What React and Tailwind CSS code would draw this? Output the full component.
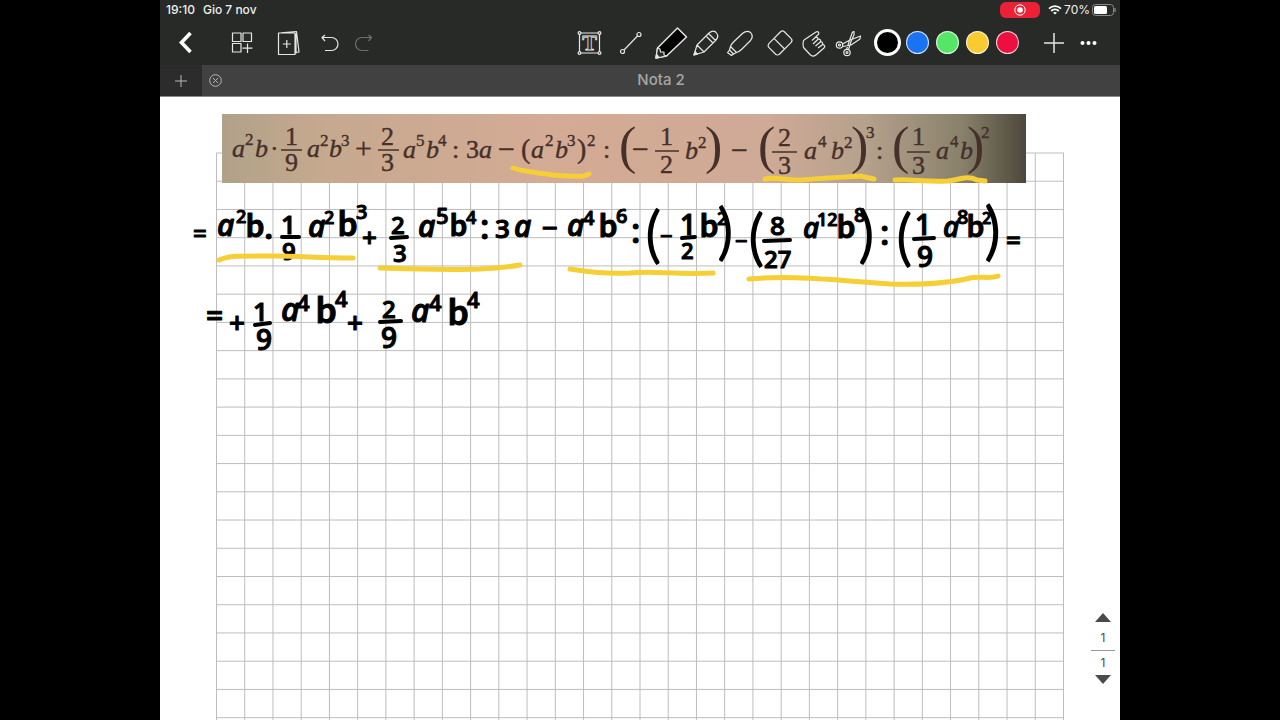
import clsx from "clsx";

const CELL = 847 / 30;

// [text, x, baseline, size]
const printed = [
  ["a", 232, 157, 26], ["2", 245, 145, 17], ["b", 255, 157, 26], ["·", 270, 157, 26],
  ["1", 285, 145, 26], ["9", 285, 171, 26],
  ["a", 307, 157, 26], ["2", 320, 146, 17], ["b", 329, 157, 26], ["3", 341, 146, 17],
  ["+", 355, 158, 30],
  ["2", 381, 145, 26], ["3", 381, 171, 26],
  ["a", 403, 158, 26], ["5", 416, 146, 17], ["b", 426, 158, 26], ["4", 438, 146, 17],
  [":", 452, 158, 26], ["3", 466, 158, 26], ["a", 479, 158, 26],
  ["−", 498, 159, 30], ["(", 521, 158, 28], ["a", 531, 158, 26], ["2", 545, 146, 17],
  ["b", 555, 158, 26], ["3", 567, 146, 17], [")", 577, 158, 28], ["2", 587, 146, 17],
  [":", 603, 158, 26],
  ["−", 632, 159, 30], ["1", 660, 145, 26], ["2", 660, 173, 26],
  ["b", 685, 159, 26], ["2", 698, 148, 17],
  ["−", 731, 160, 30],
  ["2", 778, 146, 26], ["3", 778, 174, 26],
  ["a", 804, 159, 26], ["4", 818, 147, 17], ["b", 831, 159, 26], ["2", 844, 148, 17],
  ["3", 866, 138, 17], [":", 876, 159, 26],
  ["1", 912, 145, 26], ["3", 912, 174, 26],
  ["a", 936, 159, 26], ["4", 950, 147, 17], ["b", 960, 159, 26],
  ["2", 981, 138, 17],
];

const printedBrackets = [
  ["(", 619, 163, 52], [")", 705, 163, 52],
  ["(", 758, 163, 52], [")", 851, 163, 52],
  ["(", 892, 163, 52], [")", 967, 163, 52],
];

const printedBars = [
  [281, 302, 150], [378, 399, 150], [655, 679, 151], [772, 797, 152], [907, 930, 152],
];

const written = [
  ["=", 193, 242, 24],
  ["a", 217, 236, 30], ["2", 236, 223, 18], ["b", 246, 237, 32],
  [".", 264, 239, 34], ["1", 281, 234, 26], ["9", 282, 260, 24],
  ["a", 308, 237, 30], ["2", 324, 224, 18], ["b", 338, 236, 34], ["3", 356, 219, 20],
  ["+", 362, 247, 26],
  ["2", 391, 234, 24], ["3", 393, 262, 24], ["a", 418, 237, 30], ["5", 436, 224, 22],
  ["b", 450, 236, 30], ["4", 466, 224, 18], [":", 480, 239, 34],
  ["3", 495, 238, 26], ["a", 514, 237, 30], ["−", 542, 238, 28],
  ["a", 567, 236, 30], ["4", 583, 225, 20], ["b", 599, 237, 32], ["6", 616, 223, 20],
  [":", 631, 243, 34],
  ["−", 660, 244, 22], ["1", 680, 235, 28], ["2", 681, 259, 22],
  ["b", 700, 237, 32], ["2", 717, 225, 18], ["−", 735, 249, 22],
  ["8", 770, 235, 26], ["27", 764, 268, 24],
  ["a", 803, 238, 28], ["12", 817, 226, 18], ["b", 837, 238, 32], ["8", 854, 222, 20],
  [":", 880, 245, 34],
  ["1", 915, 235, 28], ["9", 917, 267, 28],
  ["a", 943, 237, 28], ["8", 957, 224, 20], ["b", 967, 237, 30], ["2", 982, 224, 16],
  ["=", 1006, 249, 26],
  ["=", 206, 327, 30], ["+", 229, 333, 28],
  ["1", 253, 321, 26], ["9", 256, 350, 28], ["a", 281, 321, 32], ["4", 297, 311, 22],
  ["b", 316, 323, 36], ["4", 335, 307, 22], ["+", 347, 333, 28],
  ["2", 382, 318, 24], ["9", 381, 348, 28], ["a", 411, 322, 32], ["4", 429, 311, 22],
  ["b", 448, 325, 36], ["4", 467, 308, 22],
];

const writtenBrackets = [
  ["(", 645, 256, 62], [")", 717, 253, 62],
  ["(", 748, 259, 62], [")", 858, 256, 62],
  ["(", 896, 259, 62], [")", 984, 253, 64],
];

// fraction bars
const strokes = [
  "M282 237H299", "M391 238L407 237", "M682 238L695 237", "M764 241L790 240",
  "M914 239L934 238", "M255 325L270 323", "M380 322L401 321",
];

const highlights = [
  "M513 168C525 172 540 173 553 175C566 176 577 177 584 176L589 174",
  "M765 179C776 176 786 181 800 180C825 178 846 177 860 176L874 179",
  "M895 180C912 179 925 182 948 181C958 180 967 175 977 180L985 181",
  "M219 260C230 255 245 256 275 256C300 256 320 258 353 258",
  "M380 268C410 269 450 270 480 269C498 268 508 267 520 265",
  "M570 269C590 272 605 274 630 273C655 270 672 275 713 273",
  "M749 279C790 275 840 280 890 284C925 285 950 283 970 278C980 276 990 279 998 276",
];

const colors = [
  { name: "Blu", fill: "bg-[#1b72f3]" },
  { name: "Verde", fill: "bg-[#55e668]" },
  { name: "Giallo", fill: "bg-[#f8cb31]" },
  { name: "Rosso", fill: "bg-[#ec1040]" },
];

const ToolButton = ({ label, className, dimmed, children }) => (
  <button
    aria-label={label}
    className={clsx(
      "size-8 shrink-0",
      dimmed ? "text-[#6e6e6e]" : "text-[#e6e6e6]",
      className
    )}
  >
    <svg
      viewBox="0 0 32 32"
      fill="none"
      stroke="currentColor"
      strokeWidth="1.2"
      strokeLinejoin="round"
      className="size-8 overflow-visible"
    >
      {children}
    </svg>
  </button>
);

const StatusBar = () => (
  <div className="flex h-5 items-center pl-1.5 pr-1 text-xs font-medium text-[#f0f0f0]">
    <span>19:10</span>
    <span className="ml-2">Gio 7 nov</span>
    <span className="ml-auto flex h-4 w-10 items-center justify-center rounded-md bg-[#ec2135]">
      <svg viewBox="0 0 12 12" className="size-3">
        <circle cx="6" cy="6" r="5.2" fill="none" stroke="white" />
        <circle cx="6" cy="6" r="2.8" fill="white" />
      </svg>
    </span>
    <svg
      viewBox="0 0 14 10"
      fill="none"
      stroke="white"
      strokeWidth="1.8"
      className="ml-2 h-[10px] w-[14px]"
    >
      <path d="M1 3.6a8.6 8.6 0 0 1 12 0M3.2 6a5.4 5.4 0 0 1 7.6 0" />
      <path d="M7 9.6L5 7.8a3 3 0 0 1 4 0z" fill="white" stroke="none" />
    </svg>
    <span className="ml-0.5 font-normal">70%</span>
    <svg viewBox="0 0 24 12" className="ml-0.5 h-3 w-6">
      <rect x="0.5" y="0.5" width="21" height="11" rx="3" fill="none" stroke="#888" />
      <rect x="2" y="2" width="13" height="8" rx="1.5" fill="white" />
      <path d="M23 4v4" stroke="#888" strokeWidth="1.3" />
    </svg>
  </div>
);

const Toolbar = () => (
  <div className="flex h-[45px] items-center pl-[10px] pr-[15px]">
    <ToolButton label="Indietro">
      <path d="M20.5 6L11.5 15.5L20.5 25" stroke="white" strokeWidth="3.6" strokeLinejoin="miter" />
    </ToolButton>
    <ToolButton label="Pagine" className="ml-6">
      <path d="M6.5 6h8.5v8.5H6.5zM17 6H25.5v8.5h-8.5zM6.5 16.5h8.5v8.5H6.5zM21.5 16.5v9.5M16.5 21.2h10" />
    </ToolButton>
    <ToolButton label="Nuova pagina" className="ml-[14px]">
      <path d="M6.5 6H23v21.5H6.5zM9 5.8L24.5 4.5L27 25L23.5 25.5M24 6.5v20M14.8 13v8M10.8 17h8" />
    </ToolButton>
    <ToolButton label="Annulla" className="ml-[10px]">
      <path d="M11 8L8 10.5L11 14M8 10.5h9.5a6.5 6.5 0 0 1 0 13H11" />
    </ToolButton>
    <ToolButton label="Ripeti" className="ml-px" dimmed>
      <path d="M21.5 8L24.5 10.5L21.5 14M24.5 10.5H15a6.5 6.5 0 0 0 0 13h6.5" />
    </ToolButton>

    <ToolButton label="Testo" className="ml-auto">
      <path d="M7 6h17M7 26h17M5.5 7.5v17M25.5 7.5v17" />
      {[[5.5, 6], [25.5, 6], [5.5, 26], [25.5, 26]].map(([x, y]) => (
        <circle key={`${x}-${y}`} cx={x} cy={y} r="1.4" />
      ))}
      <text
        x="15.5"
        y="23"
        textAnchor="middle"
        fontSize="22"
        strokeWidth="0.8"
        className="font-['Liberation_Serif',serif] font-bold"
      >
        T
      </text>
    </ToolButton>
    <ToolButton label="Linea" className="ml-2">
      <circle cx="8.5" cy="24.5" r="2" />
      <circle cx="25" cy="7.5" r="2" />
      <path d="M10 23L23.5 9" />
    </ToolButton>
    <ToolButton label="Penna" className="ml-2">
      <path
        d="M2 31L3.5 21L23.5 1L32.5 10L12.5 29z"
        fill="black"
        strokeWidth="1.5"
      />
      <path d="M3.5 21L6 22L6.5 25L10 25L10 28L12.5 29L2 31z" fill="#282a28" />
      <path d="M2 31L2.6 27.5L5 30.3z" fill="currentColor" />
    </ToolButton>
    <ToolButton label="Matita" className="ml-1">
      <path d="M4 28L7 18L19 6C22 3.5 25 3.5 26.5 6C28.5 8.5 28 11 25.5 13.5L14 25zM7 18L14 25M16 9L23 16M18.5 6.5L25.5 13.5" />
      <path d="M4 28L5 24.8L7.4 27z" fill="currentColor" />
    </ToolButton>
    <ToolButton label="Evidenziatore" className="ml-0.5">
      <path d="M6.5 19.5C7 17.5 8 16.5 10 14.5L19 6C22 3.5 25.5 4 27 6C28.8 8.5 28.5 11 26.5 13.5L18 22C15.5 24.5 14.5 25 12.5 25.5zM6.5 19.5L5.5 23L9.5 27L12.5 25.5M5.5 23L3.5 25.5L7.5 28.5L9.5 27" />
    </ToolButton>
    <ToolButton label="Gomma" className="ml-2">
      <g transform="rotate(-45 16 16)">
        <rect x="5" y="8.5" width="22" height="15" rx="3" />
        <path d="M15 8.5v15" />
      </g>
    </ToolButton>
    <ToolButton label="Mano" className="ml-0.5">
      <path d="M6 13L18 5C20 3.8 21.8 6 20.3 7.5L14 13.5M6 13C4.5 15 5 18 5.5 20.5L12.5 28C14.5 29.5 17 29 18.5 27.5L26 21C28 19 25.5 17 24 18L20 21M24 18C26 16 23.5 14 22 15.2L17.5 19M22 15.2C23.8 13 21.5 11.5 19.8 12.5L15 17M19.8 12.5C20.5 10.5 18.5 10 17.5 10.5" />
    </ToolButton>
    <ToolButton label="Taglia" className="ml-0.5">
      <circle cx="7.5" cy="18" r="3.2" />
      <circle cx="7.5" cy="18" r="1" />
      <circle cx="15" cy="25.5" r="3.2" />
      <circle cx="15" cy="25.5" r="1" />
      <path d="M14.5 22.5L17 15L20.5 5L22 4.5V8L19 14.5L16.5 22.5M10.5 17L17 13.5L28.5 9L28 12L19 18L10.8 19.5" />
    </ToolButton>

    <div className="ml-2 flex">
      <button aria-label="Nero" className="flex size-[30px] items-center justify-center">
        <span className="size-[27px] shrink-0 rounded-full border-3 border-white bg-black" />
      </button>
      {colors.map(({ name, fill }) => (
        <button
          key={name}
          aria-label={name}
          className="flex size-[30px] items-center justify-center"
        >
          <span className={clsx("size-[23px] rounded-full border border-white/80", fill)} />
        </button>
      ))}
    </div>
    <ToolButton label="Aggiungi" className="ml-4">
      <path d="M16 6v20M6 16h20" strokeWidth="1.5" />
    </ToolButton>
    <ToolButton label="Altro" className="ml-[3px]">
      <g fill="white" stroke="none">
        <circle cx="9.5" cy="16" r="2" />
        <circle cx="15.5" cy="16" r="2" />
        <circle cx="21.5" cy="16" r="2" />
      </g>
    </ToolButton>
  </div>
);

const TabBar = () => (
  <div className="flex h-8 border-b border-[#8a8a8a] bg-[#414141] text-[#b8b8b8]">
    <button
      aria-label="Nuova scheda"
      className="flex w-[42px] items-center justify-center bg-[#2c2c2c]"
    >
      <svg viewBox="0 0 12 12" stroke="currentColor" className="size-3">
        <path d="M6 0v12M0 6h12" />
      </svg>
    </button>
    <div className="relative flex flex-1 items-center justify-center">
      <button aria-label="Chiudi scheda" className="absolute left-[7px]">
        <svg viewBox="0 0 13 13" fill="none" stroke="currentColor" className="size-[13px]">
          <circle cx="6.5" cy="6.5" r="5.8" />
          <path d="M4 4l5 5M9 4L4 9" />
        </svg>
      </button>
      <span className="text-[15px] font-medium text-[#a6a6a6]">Nota 2</span>
    </div>
  </div>
);

const Glyphs = ({ items, letters = {} }) =>
  items.map(([char, x, y, size], i) => (
    <text key={i} x={x} y={y} fontSize={size} className={letters[char]}>
      {char}
    </text>
  ));

const Sheet = () => (
  <svg
    viewBox="160 97 960 623"
    preserveAspectRatio="xMidYMin slice"
    className="size-full"
  >
    <defs>
      <linearGradient id="paper">
        <stop offset="0" stopColor="#b0a189" />
        <stop offset="0.12" stopColor="#c5a98e" />
        <stop offset="0.4" stopColor="#d4ab94" />
        <stop offset="0.68" stopColor="#cfaa96" />
        <stop offset="0.8" stopColor="#b5a18c" />
        <stop offset="0.92" stopColor="#89816b" />
        <stop offset="1" stopColor="#4d483b" />
      </linearGradient>
    </defs>

    {/* squared paper */}
    <g stroke="#bdbdbd">
      {Array.from({ length: 31 }, (_, i) => (
        <path key={i} d={`M${216.5 + i * CELL} 153V720`} />
      ))}
      {Array.from({ length: 21 }, (_, i) => (
        <path key={i} d={`M216 ${153 + i * CELL}H1064`} />
      ))}
    </g>

    {/* exercise from the book */}
    <rect x="222" y="114" width="804" height="69" fill="url(#paper)" />
    <g fill="#45302a" className="font-['Liberation_Serif',serif]">
      <Glyphs items={printedBrackets} />
      <g stroke="#45302a" strokeWidth="0.4">
        <Glyphs items={printed} letters={{ a: "italic", b: "italic" }} />
      </g>
    </g>
    <g stroke="#45302a" strokeWidth="1.5">
      {printedBars.map(([from, to, y]) => (
        <path key={from} d={`M${from} ${y}H${to}`} />
      ))}
    </g>

    {/* pen */}
    <g className="font-['Lato',sans-serif]">
      <Glyphs items={writtenBrackets} />
    </g>
    <g
      stroke="black"
      strokeLinejoin="round"
      className="font-['Open_Sans',sans-serif] font-semibold"
    >
      <Glyphs
        items={written}
        letters={{ a: "italic", b: "font-['Lato',sans-serif] font-bold" }}
      />
    </g>
    <g fill="none" stroke="black" strokeWidth="4" strokeLinecap="round">
      {strokes.map((d) => (
        <path key={d} d={d} />
      ))}
    </g>

    {/* highlighter */}
    <g fill="none" stroke="#f5cf35" strokeWidth="5" strokeLinecap="round" strokeLinejoin="round">
      {highlights.map((d) => (
        <path key={d} d={d} />
      ))}
    </g>
  </svg>
);

const Pager = () => (
  <div className="absolute bottom-9 right-[5px] flex w-6 flex-col items-center text-xs text-[#4a4a4a]">
    <button aria-label="Pagina precedente">
      <svg viewBox="0 0 16 9" fill="currentColor" className="h-[9px] w-4">
        <path d="M8 0l8 9H0z" />
      </svg>
    </button>
    <span className="mt-2 w-full border-b border-[#999] pb-1 text-center">1</span>
    <span className="mb-1 mt-1">1</span>
    <button aria-label="Pagina successiva">
      <svg viewBox="0 0 16 9" fill="currentColor" className="h-[9px] w-4">
        <path d="M0 0h16L8 9z" />
      </svg>
    </button>
  </div>
);

const App = () => {
  return (
    <div className="flex h-screen justify-center overflow-hidden bg-black">
      <div className="flex aspect-4/3 h-full flex-col bg-[#282a28] font-['Inter',sans-serif]">
        <StatusBar />
        <Toolbar />
        <TabBar />
        <main className="relative min-h-0 flex-1 bg-white">
          <Sheet />
          <Pager />
        </main>
      </div>
    </div>
  );
};

export default App;
